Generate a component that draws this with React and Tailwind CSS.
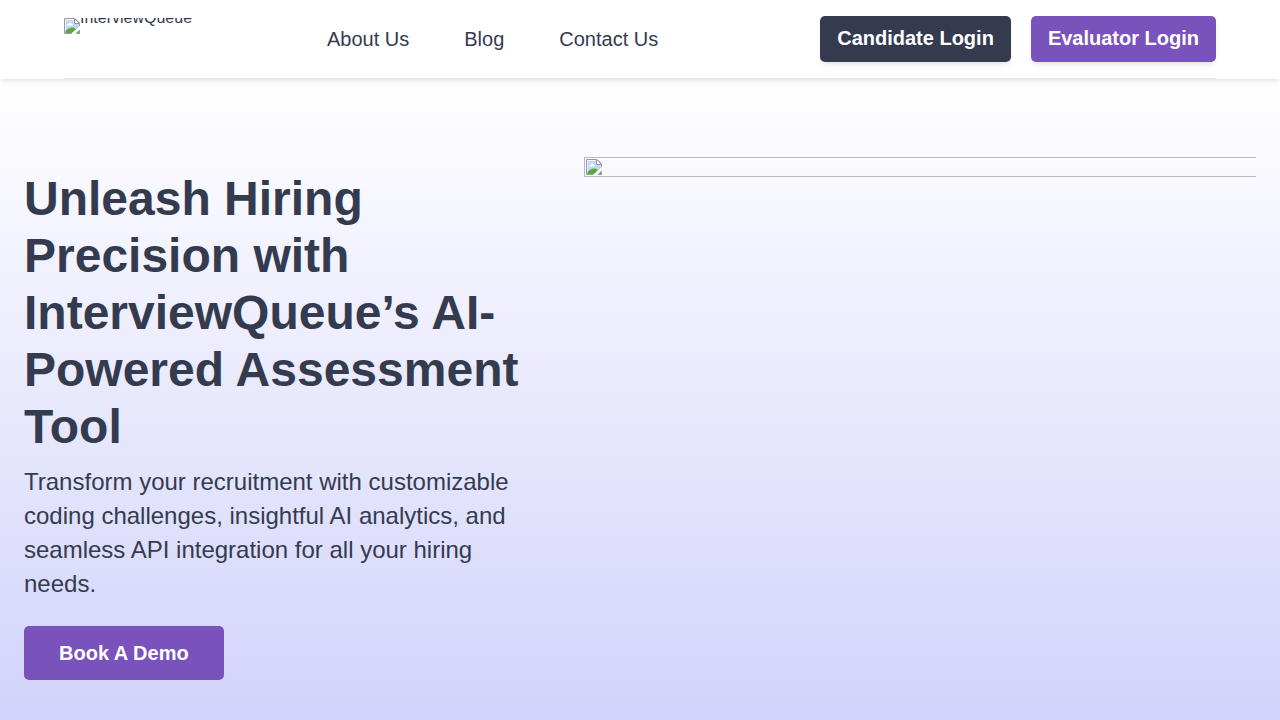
import { clsx } from "clsx"

const navLinks = [
    { label: "About Us", href: "#about" },
    { label: "Blog", href: "#blog" },
    { label: "Contact Us", href: "#contact" },
]

function PictureIcon({ className }) {
    return (
        <svg className={clsx("h-4 w-4 shrink-0", className)} viewBox="0 0 16 16" aria-hidden="true">
            <path d="M0.5 0.5H11L15.5 5V8L8 15.5H0.5Z" fill="#c3d6f5" stroke="#9a9a9e" />
            <path d="M1.5 14.5V1.5H10.5" fill="none" stroke="#eef3fc" />
            <path d="M3 7.5C2.8 6 4 5.4 4.8 5.7C5.2 4.2 7.4 4.2 7.8 5.7C9.2 5.6 9.4 7.3 8.6 7.5Z" fill="#fff" />
            <path d="M1.5 15V13C3.5 11 6 9.6 8.2 9.6C9.8 9.6 11 10.2 11.8 11.2L8 15Z" fill="#56a845" />
            <path d="M12 15.5H15.5V12Z" fill="#56a845" stroke="#9a9a9e" />
            <path d="M7 16L16 7.5V11L11 16Z" fill="#fff" />
            <path d="M10.5 0.5V5.5H15.5Z" fill="#fff" stroke="#9a9a9e" />
        </svg>
    )
}

function Header() {
    return (
        <header className="relative z-10 bg-white px-16 shadow-md shadow-black/7">
            <div className="flex items-center justify-between border-b border-gray-200 py-4">
                <a href="#home" className="flex h-[42px] w-32 items-start overflow-hidden">
                    <PictureIcon />
                    <span className="-mt-2 text-base leading-none">InterviewQueue</span>
                </a>
                <nav className="flex gap-[55px] pr-[27px] text-xl">
                    {navLinks.map((link) => (
                        <a key={link.label} href={link.href}>
                            {link.label}
                        </a>
                    ))}
                </nav>
                <div className="flex gap-5 text-xl font-bold text-white">
                    <button type="button" className="rounded-[5px] bg-[#343b4f] px-[17px] pt-2 pb-[10px] shadow-md shadow-black/7">
                        Candidate Login
                    </button>
                    <button type="button" className="rounded-[5px] bg-[#7a52bc] px-[17px] pt-2 pb-[10px] shadow-md shadow-black/7">
                        Evaluator Login
                    </button>
                </div>
            </div>
        </header>
    )
}

function Hero() {
    return (
        <main className="grid flex-1 grid-cols-[16fr_21fr] items-start gap-12 bg-linear-to-b/srgb from-white to-[#d2d3fb] px-6 pt-[78px] pb-10">
            <div className="pt-[13px]">
                <h1 className="text-5xl leading-[57px] font-bold">
                    Unleash Hiring Precision with InterviewQueue’s AI-Powered Assessment Tool
                </h1>
                <p className="mt-[10px] text-2xl leading-[34px]">
                    Transform your recruitment with customizable coding challenges, insightful AI analytics, and
                    seamless API integration for all your hiring needs.
                </p>
                <button type="button" className="mt-[25px] rounded-[5px] bg-[#7a52bc] px-[35px] py-[13px] text-xl font-bold text-white">
                    Book A Demo
                </button>
            </div>
            <div className="border border-r-0 border-[#bbbac2] p-px">
                <PictureIcon />
            </div>
        </main>
    )
}

export default function App() {
    return (
        <div className="flex min-h-screen flex-col font-['Liberation_Sans',Arial,sans-serif] text-[#343b4f]">
            <Header />
            <Hero />
        </div>
    )
}
